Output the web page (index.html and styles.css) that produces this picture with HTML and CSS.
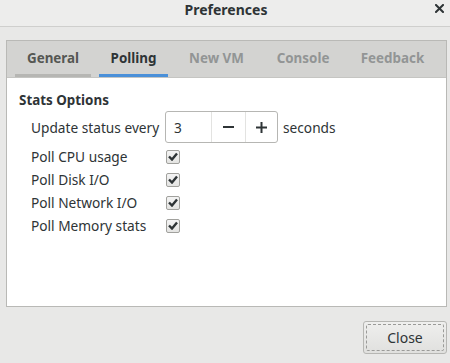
FILE: index.html
```html
<!DOCTYPE html>
<html>
<head>
<meta charset="utf-8">
<link rel="stylesheet" href="styles.css">
</head>
<body>
<div class="window">
  <header class="titlebar">
    <span class="title">Preferences</span>
    <button class="win-close" aria-label="Close">
      <svg width="9" height="9" viewBox="0 0 9 9"><path d="M1 1L8 8M8 1L1 8" stroke="#2e3436" stroke-width="2" stroke-linecap="square"/></svg>
    </button>
  </header>
  <main class="body">
    <section class="notebook">
      <nav class="tabs">
        <div class="tab tab-general">General</div>
        <div class="tab tab-active tab-polling">Polling</div>
        <div class="tab tab-dim tab-newvm">New VM</div>
        <div class="tab tab-dim tab-console">Console</div>
        <div class="tab tab-dim tab-feedback">Feedback</div>
      </nav>
      <div class="page">
        <div class="heading">Stats Options</div>
        <div class="grid">
          <div class="label">Update status every</div>
          <div class="spin-wrap">
            <div class="spin">
              <div class="spin-entry">3</div>
              <div class="spin-btn">
                <svg width="11" height="2" viewBox="0 0 11 2"><rect width="11" height="2" fill="#2e3436"/></svg>
              </div>
              <div class="spin-btn">
                <svg width="11" height="11" viewBox="0 0 11 11"><rect y="4.5" width="11" height="2" fill="#2e3436"/><rect x="4.5" width="2" height="11" fill="#2e3436"/></svg>
              </div>
            </div>
            <span class="unit">seconds</span>
          </div>
          <div class="label">Poll CPU usage</div>
          <div class="check"><svg width="10" height="9" viewBox="0 0 10 9"><path d="M1 4.5L4 7.5L9 1.5" fill="none" stroke="#2e3436" stroke-width="2.4"/></svg></div>
          <div class="label">Poll Disk I/O</div>
          <div class="check"><svg width="10" height="9" viewBox="0 0 10 9"><path d="M1 4.5L4 7.5L9 1.5" fill="none" stroke="#2e3436" stroke-width="2.4"/></svg></div>
          <div class="label">Poll Network I/O</div>
          <div class="check"><svg width="10" height="9" viewBox="0 0 10 9"><path d="M1 4.5L4 7.5L9 1.5" fill="none" stroke="#2e3436" stroke-width="2.4"/></svg></div>
          <div class="label">Poll Memory stats</div>
          <div class="check"><svg width="10" height="9" viewBox="0 0 10 9"><path d="M1 4.5L4 7.5L9 1.5" fill="none" stroke="#2e3436" stroke-width="2.4"/></svg></div>
        </div>
      </div>
    </section>
    <footer class="actions">
      <button class="close-btn"><span class="focus">Close</span></button>
    </footer>
  </main>
</div>
</body>
</html>
```

FILE: styles.css
```css
* { box-sizing: border-box; }
html, body {
  margin: 0;
  padding: 0;
}
body {
  width: 450px;
  height: 363px;
  background: #e8e8e7;
  font-family: "Noto Sans", "Open Sans", sans-serif;
  font-size: 13.7px;
  color: #2e3436;
  overflow: hidden;
}
.window {
  width: 450px;
  height: 363px;
  display: flex;
  flex-direction: column;
}
.titlebar {
  height: 27px;
  background: #ededec;
  border-bottom: 1px solid #cfcfcd;
  display: flex;
  align-items: center;
  justify-content: center;
  position: relative;
}
.title {
  font-weight: bold;
  font-size: 14px;
  color: #2e3436;
  margin-top: -7px;
  padding-left: 2px;
}
.win-close {
  position: absolute;
  right: 5px;
  top: 4px;
  width: 10px;
  height: 10px;
  padding: 0;
  border: 0;
  background: none;
  display: flex;
}
.body {
  flex: 1;
  display: flex;
  flex-direction: column;
  padding: 13px 3px 0 6px;
}
.notebook {
  border: 1px solid #b9b9b6;
  height: 267px;
  display: flex;
  flex-direction: column;
}
.tabs {
  height: 37px;
  background: #d3d3d1;
  display: flex;
  padding-left: 4px;
  border-bottom: 1px solid #c5c5c2;
}
.tab {
  margin: 0 4px;
  height: 36px;
  display: flex;
  align-items: center;
  justify-content: center;
  white-space: nowrap;
  font-weight: bold;
  font-size: 13.4px;
  color: #555753;
  border-bottom: 3px solid transparent;
  padding-top: 1px;
}
.tab-general { width: 76px; border-bottom-color: #b6b6b3; }
.tab-polling { width: 69px; }
.tab-newvm { width: 81px; }
.tab-console { width: 76px; }
.tab-feedback { width: 87px; }
.tab-active {
  color: #2e3436;
  border-bottom-color: #4a90d9;
}
.tab-dim { color: #929595; }
.page {
  flex: 1;
  background: #ffffff;
  padding: 12px 0 0 12px;
}
.heading {
  font-weight: bold;
  font-size: 13.4px;
  line-height: 20px;
}
.grid {
  display: grid;
  grid-template-columns: 134px auto;
  grid-template-rows: 32px;
  grid-auto-rows: 19px;
  row-gap: 4px;
  padding-left: 12px;
  margin-top: 1px;
  align-items: center;
}
.grid > :nth-child(1), .grid > :nth-child(2) { align-self: stretch; }
.label {
  display: flex;
  align-items: center;
  white-space: nowrap;
}
.spin-wrap {
  display: flex;
  align-items: center;
  gap: 5px;
}
.spin {
  display: flex;
  height: 32px;
  width: 113px;
  border: 1px solid #b6b6b3;
  border-radius: 3px;
  background: #fff;
}
.spin-entry {
  width: 47px;
  padding-left: 8px;
  display: flex;
  align-items: center;
  border-right: 1px solid #e3e3e1;
}
.spin-btn {
  width: 33px;
  display: flex;
  align-items: center;
  justify-content: center;
}
.spin-btn:last-child { border-left: 1px solid #e3e3e1; }
.check {
  width: 14px;
  height: 14px;
  border: 1px solid #a1a19d;
  border-radius: 2px;
  background: linear-gradient(#f4f4f4, #e4e4e2);
  display: flex;
  align-items: center;
  justify-content: center;
  margin-left: 1px;
}
.actions {
  flex: 1;
  display: flex;
  justify-content: flex-end;
  align-items: flex-start;
  padding-top: 14px;
}
.close-btn {
  width: 84px;
  height: 33px;
  border: 1px solid #b6b6b3;
  border-radius: 3px;
  background: linear-gradient(#efefee, #e0e0de);
  padding: 2px;
  font-family: inherit;
  font-size: 14px;
  color: #2e3436;
  display: flex;
}
.focus {
  flex: 1;
  border: 1px dashed #9a9a98;
  border-radius: 2px;
  display: flex;
  align-items: center;
  justify-content: center;
}
```
